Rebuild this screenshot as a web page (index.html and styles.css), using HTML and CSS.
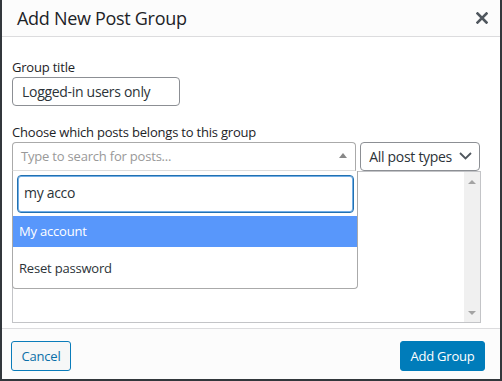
FILE: index.html
```html
<!DOCTYPE html>
<html>
<head>
<meta charset="utf-8">
<link rel="stylesheet" href="styles.css">
</head>
<body>
<div class="modal">
  <div class="header">
    <h1 class="title">Add New Post Group</h1>
    <span class="close">
      <svg width="12" height="12" viewBox="0 0 12 12"><path d="M1.5 1.5 L10.5 10.5 M10.5 1.5 L1.5 10.5" stroke="#50575e" stroke-width="2.6" stroke-linecap="square"/></svg>
    </span>
  </div>
  <div class="content">
    <label class="label">Group title</label>
    <div class="text-input">Logged-in users only</div>
    <label class="label label-2">Choose which posts belongs to this group</label>
    <div class="row">
      <div class="select2">
        <div class="selection">
          <span class="placeholder">Type to search for posts...</span>
          <span class="arrow-up"></span>
        </div>
        <div class="dropdown">
          <div class="search-wrap">
            <div class="search">my acco</div>
          </div>
          <div class="option active">My account</div>
          <div class="option option-last">Reset password</div>
        </div>
      </div>
      <div class="type-select">
        <span>All post types</span>
        <svg width="13" height="8" viewBox="0 0 13 8"><path d="M1 1 L6.5 6.5 L12 1" stroke="#50575e" stroke-width="1.8" fill="none"/></svg>
      </div>
    </div>
    <div class="listbox">
      <div class="scrollbar">
        <span class="sb-up"></span>
        <span class="sb-down"></span>
      </div>
    </div>
  </div>
  <div class="footer">
    <button class="btn btn-secondary">Cancel</button>
    <button class="btn btn-primary">Add Group</button>
  </div>
</div>
</body>
</html>
```
FILE: styles.css
```css
* { box-sizing: border-box; }
html, body { margin: 0; padding: 0; }
body {
  width: 502px;
  height: 381px;
  font-family: "Open Sans", "Noto Sans", sans-serif;
  color: #1d2327;
  background: #fff;
}
.modal {
  width: 502px;
  height: 381px;
  border: 2px solid #32373c;
  border-top: none;
  display: flex;
  flex-direction: column;
  background: #fff;
}
.header {
  height: 38px;
  background: #fcfcfc;
  border-bottom: 1px solid #dcdcde;
  display: flex;
  align-items: center;
  justify-content: space-between;
  padding: 0 12px 0 15px;
}
.title {
  margin: 0;
  font-size: 18px;
  font-weight: 400;
  letter-spacing: -0.3px;
  color: #1d2327;
  line-height: 24px;
  padding-top: 1px;
}
.close { display: flex; padding-top: 1px; }
.content {
  flex: 1;
  padding: 21px 20px 5px 10px;
  display: flex;
  flex-direction: column;
}
.label {
  font-size: 13px;
  line-height: 18px;
  letter-spacing: -0.2px;
  color: #1d2327;
}
.text-input {
  margin-top: 1px;
  width: 168px;
  height: 29px;
  border: 1px solid #8c8f94;
  border-radius: 4px;
  font-size: 14px;
  letter-spacing: -0.3px;
  line-height: 27px;
  padding-left: 9px;
  color: #2c3338;
}
.label-2 { margin-top: 17px; }
.row {
  margin-top: 1px;
  display: flex;
  gap: 4px;
  height: 29px;
}
.select2 {
  position: relative;
  width: 345px;
}
.selection {
  height: 29px;
  border: 1px solid #aaa;
  border-bottom-color: #ddd;
  border-radius: 4px 4px 0 0;
  display: flex;
  align-items: center;
  justify-content: space-between;
  padding: 0 8px 0 8px;
  background: #fff;
}
.placeholder {
  font-size: 13px;
  letter-spacing: -0.2px;
  color: #999;
}
.arrow-up {
  width: 0; height: 0;
  border-left: 4.5px solid transparent;
  border-right: 4.5px solid transparent;
  border-bottom: 5px solid #888;
  margin-top: -1px;
}
.dropdown {
  position: absolute;
  top: 29px;
  left: 0;
  width: 346px;
  height: 118px;
  background: #fff;
  border: 1px solid #aaa;
  border-top: none;
  border-radius: 0 0 4px 4px;
  z-index: 5;
}
.search-wrap { padding: 4px 3px 3px 4px; }
.search {
  height: 38px;
  border: 1px solid #2271b1;
  box-shadow: 0 0 0 1px #72aee6 inset;
  border-radius: 4px;
  font-size: 14px;
  letter-spacing: -0.3px;
  line-height: 34px;
  padding-left: 6px;
  color: #2c3338;
}
.option {
  font-size: 13px;
  letter-spacing: -0.2px;
  padding-left: 6px;
  display: flex;
  align-items: center;
  color: #2c3338;
}
.option.active {
  background: #5897fb;
  color: #fff;
  height: 31px;
}
.option-last { height: 42px; }
.type-select {
  width: 120px;
  height: 29px;
  border: 1px solid #8c8f94;
  border-radius: 4px;
  display: flex;
  align-items: center;
  justify-content: space-between;
  padding: 0 7px 0 8px;
  font-size: 14px;
  letter-spacing: -0.3px;
  color: #2c3338;
}
.listbox {
  height: 152px;
  width: 469px;
  border: 1px solid #c3c4c7;
  display: flex;
  justify-content: flex-end;
}
.scrollbar {
  width: 16px;
  background: #f0f0f0;
  display: flex;
  flex-direction: column;
  justify-content: space-between;
  align-items: center;
  padding: 8px 0 7px;
}
.sb-up {
  width: 0; height: 0;
  border-left: 4px solid transparent;
  border-right: 4px solid transparent;
  border-bottom: 4px solid #a3a3a3;
}
.sb-down {
  width: 0; height: 0;
  border-left: 4px solid transparent;
  border-right: 4px solid transparent;
  border-top: 4px solid #a3a3a3;
}
.footer {
  height: 53px;
  background: #fcfcfc;
  border-top: 1px solid #dcdcde;
  display: flex;
  justify-content: space-between;
  align-items: flex-start;
  padding: 12px 15px 0 9px;
}
.btn {
  height: 30px;
  font-family: "Open Sans", "Noto Sans", sans-serif;
  font-size: 13px;
  letter-spacing: -0.2px;
  border-radius: 3px;
  padding: 0 10px;
  cursor: pointer;
}
.btn-secondary {
  width: 60px;
  background: #f6f7f7;
  border: 1px solid #0a7cba;
  color: #0a6fa8;
}
.btn-secondary { padding: 0; }
.btn-primary {
  width: 85px;
  padding: 0;
  background: #007cba;
  border: 1px solid #007cba;
  color: #fff;
}
```
